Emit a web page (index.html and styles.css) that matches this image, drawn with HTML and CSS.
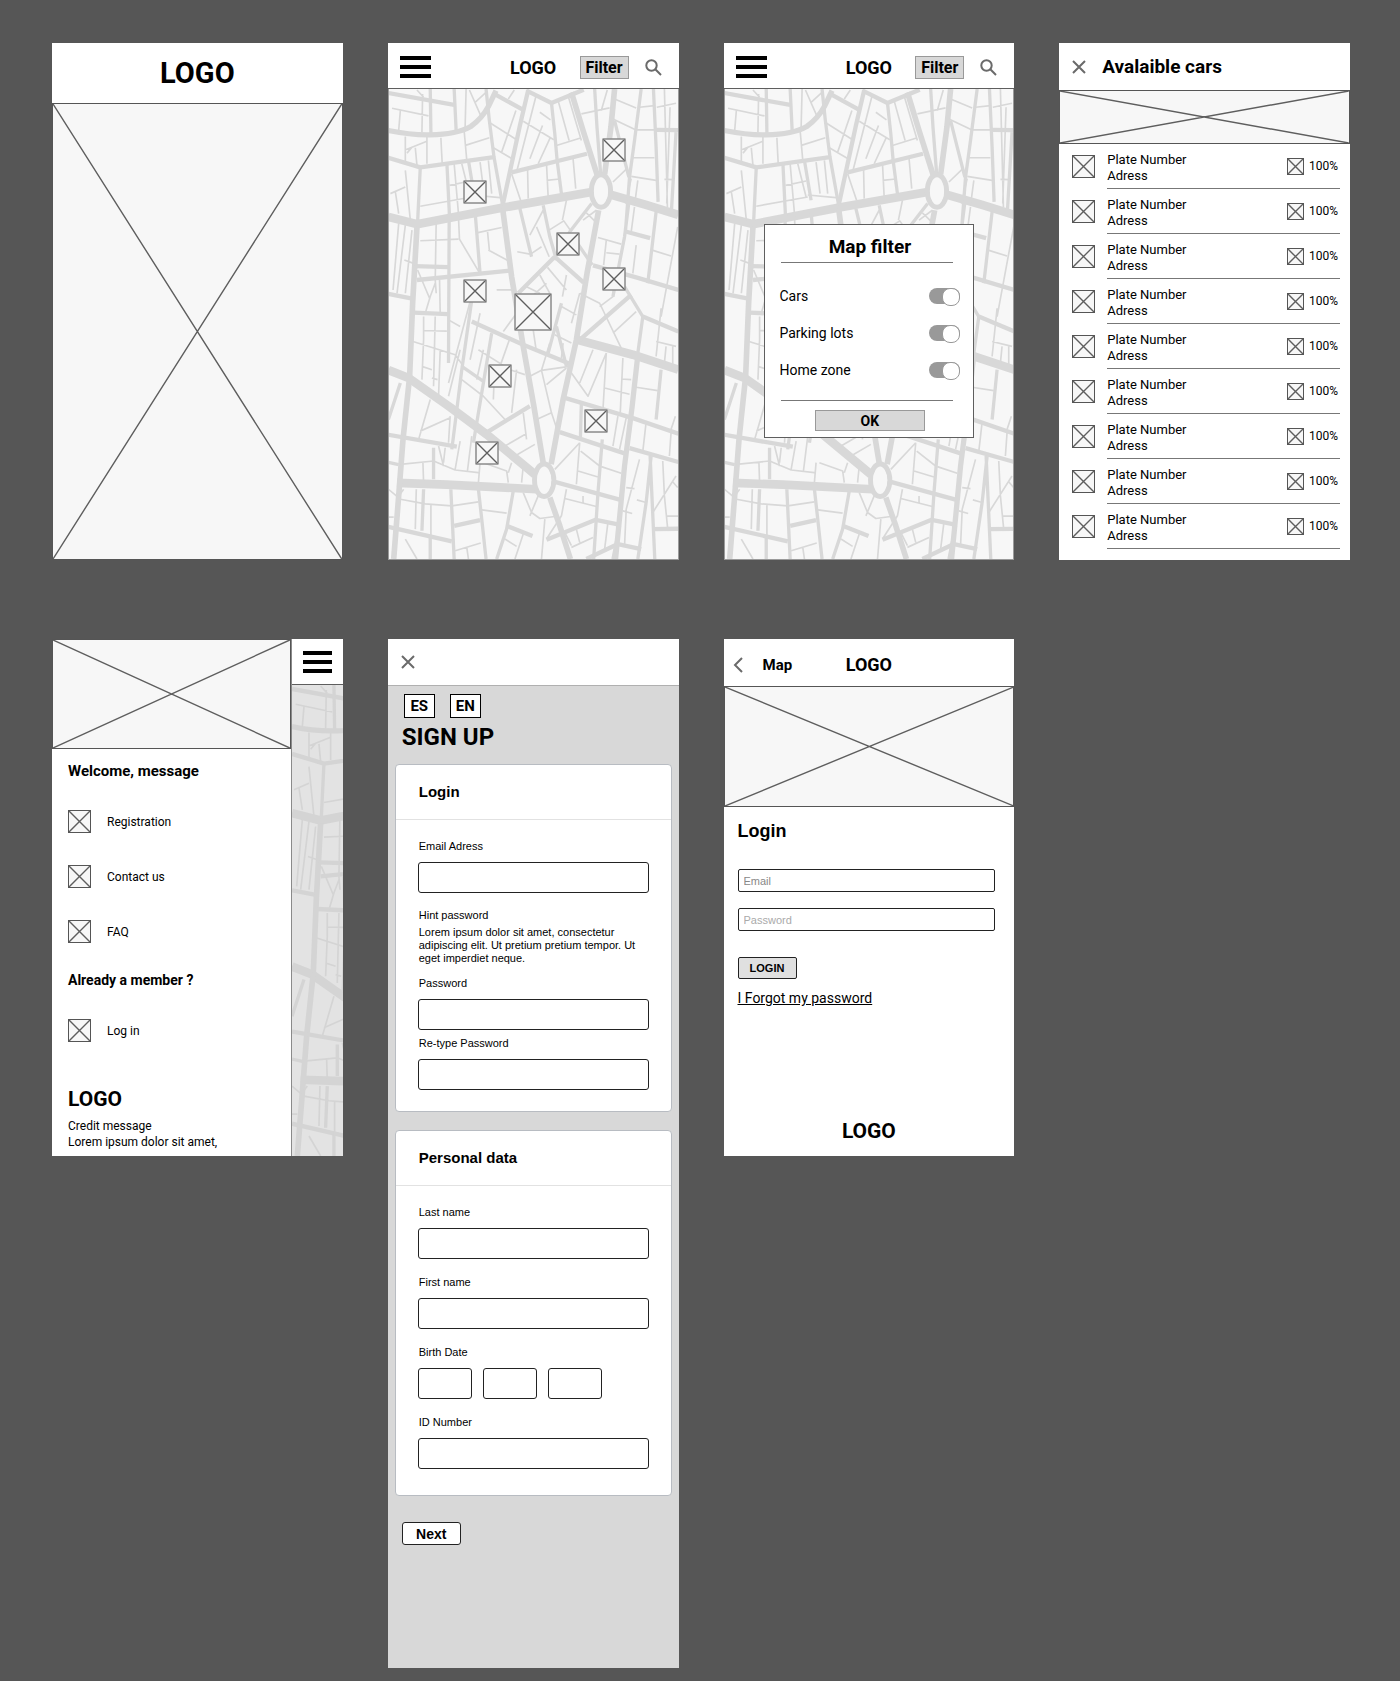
FILE: index.html
```html
<!DOCTYPE html>
<html lang="en">
<head>
<meta charset="utf-8">
<meta name="viewport" content="width=device-width, initial-scale=1">
<title>Car sharing wireframes</title>
<link rel="stylesheet" href="styles.css">
</head>
<body>
<svg class="defs" aria-hidden="true">
  <defs>
    <g id="cross"><path d="M0 0L100 100M100 0L0 100" stroke-width="1.4" vector-effect="non-scaling-stroke"/></g>
    <g id="roads" fill="none" stroke-linejoin="round">
      <!-- boulevards -->
      <path stroke-width="26" d="M24 560L110 582L370 532L640 484M690 492L800 524L897 554M585 928L760 975L897 1020M24 1021L85 1045L210 1133L320 1215L465 1335M50 1361L200 1366L470 1380"/>
      <!-- avenues -->
      <path stroke-width="17" d="M575 185L610 300L652 432M705 175L694 290L675 432M657 540L622 730L590 930L550 1110L514 1305M368 535L395 740L430 950L462 1130L490 1300M110 590L97 820L88 1040L68 1230L55 1400L40 1590M510 1405L540 1490L572 1590"/>
      <path stroke-width="16" d="M24 300Q90 314 150 313Q230 312 272 288Q305 265 325 228L348 180M775 975L758 1130L735 1310L708 1590"/>
      <!-- main streets -->
      <path stroke-width="13" d="M24 382L120 411L342 380M24 187L222 223M348 193L430 238M445 178L420 285L395 400L368 525M440 180L515 217L612 177M395 426L622 370M830 298L897 299M738 604L812 624M640 706L770 742L897 780M790 860L897 905M104 708L205 711M110 750L390 722M24 792L92 805M100 848L203 853M275 875L430 945L570 1002M555 1105L760 1166L897 1213M540 1208L735 1272M750 1256L897 1298M525 1358L720 1411M24 1216L230 1252M24 1493L215 1537M820 1500L897 1499M620 1590L715 1545L785 1560M380 1490L458 1521M500 1532L648 1472L715 1486M222 1490L300 1473M318 1210L450 1130M525 680L415 790M525 680L612 758M600 930L680 860L755 795"/>
      <path stroke-width="10" d="M150 175L152 308M222 175L228 300M318 175L328 270L342 380L368 525M120 411L112 575M515 217L525 310L532 390L545 490M645 175L652 290L663 430M705 270L725 350L748 440M785 175L765 330L750 440L738 600M822 175L830 350L836 515M890 305L876 545M200 395L208 560M265 390L285 510M207 570L205 1000M490 525L510 620L530 690M636 520L570 605L525 680M750 500L735 620L700 800M735 770L790 860L775 970M590 635L638 705M420 535L455 680M830 545L805 760M285 545L300 730M24 1299L55 1306M275 810L245 1020L215 1260M335 910L310 1060L280 1240M245 1010L310 1055M60 1060L24 1170M845 1020L830 1170M400 1385L380 1500L350 1590M212 1380L222 1590M295 1380L305 1470L318 1590M655 1390L642 1590M668 1230L655 1390M815 1280L800 1420L775 1590M812 1280L826 1590M720 1490L700 1590M130 1380L125 1505M150 1525L150 1590M560 1010L530 890M605 1120L602 1230M160 1255L160 1350M545 820L505 970"/>
      <!-- side streets -->
      <path stroke-width="5" d="M127 190L125 305M258 175L255 290M35 233L145 256M60 240L55 300M110 178L130 200M268 178L305 262M285 215L318 185M75 318L75 395M140 318L140 400M182 322L186 400M78 357L140 332M80 368L95 350M105 352L110 405M252 300L260 390M258 344L328 322M327 275L410 328M408 240L365 365M340 352L395 384M385 205L403 178M470 190L410 425M480 245L512 268M430 272L522 328M488 285L450 385M512 320L475 400M535 210L568 330M565 195L605 330M530 345L605 322M605 250L690 232M665 240L683 178M705 205L770 232M700 265L768 298L832 298M780 230L825 225M760 382L825 382M755 438L830 450M890 218L832 230M855 175L864 530M872 230L862 520M855 447L885 448M300 395L312 490M325 390L335 490M222 400L235 550M245 400L270 500M208 465L270 452M275 494L360 502M120 528L275 500M395 430L422 510M443 415L445 505M500 400L505 500M580 385L588 475M500 450L540 446M75 420L90 570M75 470L30 490M45 485L55 550M775 450L765 525M755 445L738 520M700 455L742 415"/>
      <path stroke-width="5" d="M55 580L38 780M75 585L50 790M95 600L75 790M72 690L100 700M120 632L235 627M168 570L165 750L168 790M235 560L238 627L298 728M112 720L148 805M148 805L165 760M178 750L180 850M290 608L365 592M325 660L385 692M328 660L322 600M490 540L450 615M470 590L508 680M412 665L450 672M452 672L485 650M508 600L552 572L575 605M560 510L548 570M620 548L645 572M610 570L650 540M655 622L725 642M680 630L672 705M680 668L720 672M765 530L755 605M818 660L875 678M895 590L845 860M770 645L760 730M708 720L700 800L660 830M503 712L560 780M560 735L548 800M600 790L575 880M480 735L510 790M440 770L480 790M455 800L500 760M350 780L400 780M130 860L130 930L125 1050M165 860L160 1070M130 902L200 904M98 935L225 975L250 1010M180 960L175 1100M150 800L135 850M125 1010L155 1020M155 1045L172 1050M205 870L240 890M270 815L205 1060M240 960L205 1100M300 850L270 990M310 960L290 1050M295 960L390 1020L435 1035M390 925L360 1010M370 905L410 850M343 1030L340 1110M410 1020L395 1150M245 1050L310 1100L375 1170M450 1040L485 1022L570 1010M485 1022L510 940M485 1022L515 1150L530 1195M500 1065L560 1015M470 1170L515 1150M460 900L468 955M545 830L590 855M525 915L575 940M550 940L545 985M600 790L660 820L725 955M700 910L770 845M845 835L830 980M830 935L890 950M860 950L855 1000M880 950L880 1010"/>
      <path stroke-width="5" d="M575 1030L625 1100L680 970M640 960L600 1060M680 970L670 1140M675 1075L750 1094M730 985L722 1150M725 1048L755 1050M770 1073L835 1083M715 1160L700 1250M740 1165L720 1260M800 1178L790 1265M875 1210L870 1280M888 1160L875 1200M150 1110L115 1230M120 1205L210 1165M210 1160L205 1240M175 1250L190 1310M195 1255L190 1300M60 1305L160 1295L225 1322L295 1330M128 1300L130 1360M240 1235L225 1320M275 1220L262 1325M300 1300L295 1360M310 1300L380 1325L385 1360M395 1300L385 1330M375 1250L440 1212M430 1150L440 1230M405 1280L465 1245M430 1310L425 1360M525 1320L600 1240M600 1240L590 1365M603 1265L660 1310M595 1325L655 1343M665 1312L725 1332M560 1380L545 1460L500 1530M555 1408L650 1432M610 1400L610 1420M740 1375L765 1378M730 1445L758 1453M780 1290L740 1440L735 1550M772 1412L800 1420M850 1295L855 1400L865 1500M890 1340L820 1450M878 1355L895 1375M860 1460L897 1461M24 1380L60 1410L135 1424L215 1430L295 1418M108 1380L105 1500M152 1425L152 1530M75 1530L110 1590M225 1565L302 1542M305 1442L380 1452M430 1390L455 1450L480 1468L525 1462M475 1400L450 1460M495 1470L485 1590M375 1530L410 1552M430 1515L405 1590M555 1510L575 1550M590 1500L600 1540M575 1555L640 1525M685 1480L675 1560M24 1464L40 1464M260 1555L265 1590M70 1380L55 1400"/>
      <ellipse cx="664" cy="482" rx="29" ry="49" stroke-width="15"/>
      <ellipse cx="493" cy="1353" rx="29" ry="49" stroke-width="15"/>
    </g>
    <g id="islands"><ellipse cx="664" cy="482" rx="21" ry="36"/><ellipse cx="493" cy="1353" rx="21" ry="35"/></g>
  </defs>
</svg>

<main class="board">
  <section class="screen" aria-label="Splash">
    <header class="bar bar-splash"><h1 class="logo logo-xl">LOGO</h1></header>
    <svg class="cross hero" viewBox="0 0 100 100" preserveAspectRatio="none"><use href="#cross"/></svg>
  </section>

  <section class="screen" aria-label="Map">
    <header class="bar bar-map">
      <button class="burger" aria-label="Menu"><span></span><span></span><span></span></button>
      <h2 class="logo">LOGO</h2>
      <div class="tools">
        <button class="filter">Filter</button>
        <button class="icon" aria-label="Search"><svg width="17" height="17" viewBox="0 0 17 17"><circle cx="6.500" cy="6.500" r="5.200"/><path d="M10.300 10.300L16 16"/></svg></button>
      </div>
    </header>
    <div class="map">
      <svg viewBox="24 175 873 1415" preserveAspectRatio="xMidYMin slice"><use href="#roads"/><use class="islands" href="#islands"/></svg>
      <button class="pin" style="left:78%;top:13%" aria-label="Car"><svg class="cross" viewBox="0 0 100 100"><use href="#cross"/></svg></button>
      <button class="pin" style="left:30%;top:22%" aria-label="Car"><svg class="cross" viewBox="0 0 100 100"><use href="#cross"/></svg></button>
      <button class="pin" style="left:62%;top:33%" aria-label="Car"><svg class="cross" viewBox="0 0 100 100"><use href="#cross"/></svg></button>
      <button class="pin" style="left:78%;top:40.500%" aria-label="Car"><svg class="cross" viewBox="0 0 100 100"><use href="#cross"/></svg></button>
      <button class="pin" style="left:30%;top:43%" aria-label="Car"><svg class="cross" viewBox="0 0 100 100"><use href="#cross"/></svg></button>
      <button class="pin pin-large" style="left:50%;top:47.500%" aria-label="My position"><svg class="cross" viewBox="0 0 100 100"><use href="#cross"/></svg></button>
      <button class="pin" style="left:38.500%;top:61%" aria-label="Car"><svg class="cross" viewBox="0 0 100 100"><use href="#cross"/></svg></button>
      <button class="pin" style="left:71.700%;top:70.700%" aria-label="Car"><svg class="cross" viewBox="0 0 100 100"><use href="#cross"/></svg></button>
      <button class="pin" style="left:34%;top:77.400%" aria-label="Car"><svg class="cross" viewBox="0 0 100 100"><use href="#cross"/></svg></button>
    </div>
  </section>

  <section class="screen" aria-label="Map filter">
    <header class="bar bar-map">
      <button class="burger" aria-label="Menu"><span></span><span></span><span></span></button>
      <h2 class="logo">LOGO</h2>
      <div class="tools">
        <button class="filter">Filter</button>
        <button class="icon" aria-label="Search"><svg width="17" height="17" viewBox="0 0 17 17"><circle cx="6.500" cy="6.500" r="5.200"/><path d="M10.300 10.300L16 16"/></svg></button>
      </div>
    </header>
    <div class="map">
      <svg viewBox="24 175 873 1415" preserveAspectRatio="xMidYMin slice"><use href="#roads"/><use class="islands" href="#islands"/></svg>
      <form class="dialog">
        <h3>Map filter</h3>
        <hr>
        <div class="switches">
          <label>Cars<input type="checkbox" checked></label>
          <label>Parking lots<input type="checkbox" checked></label>
          <label>Home zone<input type="checkbox" checked></label>
        </div>
        <hr>
        <button type="button" class="ok">OK</button>
      </form>
    </div>
  </section>

  <section class="screen" aria-label="Available cars">
    <header class="bar bar-cars">
      <button class="icon" aria-label="Close"><svg width="14" height="14" viewBox="0 0 14 14"><path d="M1 1L13 13M13 1L1 13"/></svg></button>
      <h2>Avalaible cars</h2>
    </header>
    <svg class="cross banner-s" viewBox="0 0 100 100" preserveAspectRatio="none"><use href="#cross"/></svg>
    <ul class="cars">
      <li><svg class="cross box" viewBox="0 0 100 100"><use href="#cross"/></svg><div class="car"><p>Plate Number<br>Adress</p><svg class="cross box-s" viewBox="0 0 100 100"><use href="#cross"/></svg><span>100%</span></div></li>
      <li><svg class="cross box" viewBox="0 0 100 100"><use href="#cross"/></svg><div class="car"><p>Plate Number<br>Adress</p><svg class="cross box-s" viewBox="0 0 100 100"><use href="#cross"/></svg><span>100%</span></div></li>
      <li><svg class="cross box" viewBox="0 0 100 100"><use href="#cross"/></svg><div class="car"><p>Plate Number<br>Adress</p><svg class="cross box-s" viewBox="0 0 100 100"><use href="#cross"/></svg><span>100%</span></div></li>
      <li><svg class="cross box" viewBox="0 0 100 100"><use href="#cross"/></svg><div class="car"><p>Plate Number<br>Adress</p><svg class="cross box-s" viewBox="0 0 100 100"><use href="#cross"/></svg><span>100%</span></div></li>
      <li><svg class="cross box" viewBox="0 0 100 100"><use href="#cross"/></svg><div class="car"><p>Plate Number<br>Adress</p><svg class="cross box-s" viewBox="0 0 100 100"><use href="#cross"/></svg><span>100%</span></div></li>
      <li><svg class="cross box" viewBox="0 0 100 100"><use href="#cross"/></svg><div class="car"><p>Plate Number<br>Adress</p><svg class="cross box-s" viewBox="0 0 100 100"><use href="#cross"/></svg><span>100%</span></div></li>
      <li><svg class="cross box" viewBox="0 0 100 100"><use href="#cross"/></svg><div class="car"><p>Plate Number<br>Adress</p><svg class="cross box-s" viewBox="0 0 100 100"><use href="#cross"/></svg><span>100%</span></div></li>
      <li><svg class="cross box" viewBox="0 0 100 100"><use href="#cross"/></svg><div class="car"><p>Plate Number<br>Adress</p><svg class="cross box-s" viewBox="0 0 100 100"><use href="#cross"/></svg><span>100%</span></div></li>
      <li><svg class="cross box" viewBox="0 0 100 100"><use href="#cross"/></svg><div class="car"><p>Plate Number<br>Adress</p><svg class="cross box-s" viewBox="0 0 100 100"><use href="#cross"/></svg><span>100%</span></div></li>
    </ul>
  </section>

  <section class="screen screen-menu" aria-label="Menu">
    <div class="drawer">
      <svg class="cross banner-m" viewBox="0 0 100 100" preserveAspectRatio="none"><use href="#cross"/></svg>
      <nav class="menu">
        <h2>Welcome, message</h2>
        <a href="#"><svg class="cross box" viewBox="0 0 100 100"><use href="#cross"/></svg>Registration</a>
        <a href="#"><svg class="cross box" viewBox="0 0 100 100"><use href="#cross"/></svg>Contact us</a>
        <a href="#"><svg class="cross box" viewBox="0 0 100 100"><use href="#cross"/></svg>FAQ</a>
        <h3>Already a member ?</h3>
        <a href="#"><svg class="cross box" viewBox="0 0 100 100"><use href="#cross"/></svg>Log in</a>
      </nav>
      <footer class="credit">
        <p class="logo logo-m">LOGO</p>
        <p>Credit message<br>Lorem ipsum dolor sit amet,</p>
      </footer>
    </div>
    <div class="behind">
      <header class="bar bar-behind"><button class="burger" aria-label="Close menu"><span></span><span></span><span></span></button></header>
      <svg class="strip" viewBox="24 175 873 1415" preserveAspectRatio="xMinYMin slice"><use href="#roads"/></svg>
    </div>
  </section>

  <section class="screen screen-signup" aria-label="Sign up">
    <header class="bar bar-signup">
      <button class="icon" aria-label="Close"><svg width="14" height="14" viewBox="0 0 14 14"><path d="M1 1L13 13M13 1L1 13"/></svg></button>
    </header>
    <form class="signup">
      <div class="langs"><button type="button">ES</button><button type="button">EN</button></div>
      <h2>SIGN UP</h2>
      <section class="card">
        <h3>Login</h3>
        <div class="fields">
          <div class="field"><label for="su-mail">Email Adress</label><input id="su-mail" type="email"></div>
          <div class="hint"><p>Hint password</p><p>Lorem ipsum dolor sit amet, consectetur<br>adipiscing elit. Ut pretium pretium tempor. Ut<br>eget imperdiet neque.</p></div>
          <div class="field field-first"><label for="su-pass">Password</label><input id="su-pass" type="password"></div>
          <div class="field"><label for="su-pass2">Re-type Password</label><input id="su-pass2" type="password"></div>
        </div>
      </section>
      <section class="card card-personal">
        <h3>Personal data</h3>
        <div class="fields">
          <div class="field"><label for="last">Last name</label><input id="last" type="text"></div>
          <div class="field"><label for="first">First name</label><input id="first" type="text"></div>
          <div class="field"><label for="day">Birth Date</label><div class="date"><input id="day" type="text" aria-label="Day"><input type="text" aria-label="Month"><input type="text" aria-label="Year"></div></div>
          <div class="field"><label for="idn">ID Number</label><input id="idn" type="text"></div>
        </div>
      </section>
      <button type="button" class="next">Next</button>
    </form>
  </section>

  <section class="screen" aria-label="Login">
    <header class="bar bar-login">
      <a class="back" href="#"><svg width="10" height="16" viewBox="0 0 10 16"><path d="M9 1L2 8L9 15"/></svg>Map</a>
      <h2 class="logo">LOGO</h2>
    </header>
    <svg class="cross banner-l" viewBox="0 0 100 100" preserveAspectRatio="none"><use href="#cross"/></svg>
    <form class="login">
      <h3>Login</h3>
      <input type="email" placeholder="Email" aria-label="Email">
      <input type="password" class="pass" placeholder="Password" aria-label="Password">
      <button type="button">LOGIN</button>
      <a href="#">I Forgot my password</a>
    </form>
    <p class="logo logo-m logo-foot">LOGO</p>
  </section>
</main>
</body>
</html>
```
FILE: styles.css
```css
* { box-sizing: border-box; }

body {
  margin: 0;
  background: #565656;
  color: #000;
  font-family: Roboto, "Liberation Sans", sans-serif;
  font-size: 12px;
}

h1, h2, h3, p, ul { margin: 0; padding: 0; }
ul { list-style: none; }
svg { display: block; }
button, input { font-family: inherit; color: inherit; margin: 0; }
button { padding: 0; cursor: pointer; }
a { color: inherit; }

.defs { position: absolute; width: 0; height: 0; }

.board {
  display: grid;
  grid-template-columns: repeat(4, minmax(0, 1fr));
  align-items: start;
  gap: 79px 45px;
  padding: 43px 50px 13px 52px;
}

.screen {
  display: flex;
  flex-direction: column;
  min-height: 517px;
  background: #fff;
}

/* shared pieces */
.cross {
  width: 100%;
  background: #f7f7f7;
  border: 1px solid #555;
  stroke: #5e5e5e;
}
.box { width: 23px; height: 23px; flex: none; }
.box-s { width: 17px; height: 17px; flex: none; }
.hero { flex: 1 1 0; height: 0; }
.banner-s { height: 54px; }
.banner-m { height: 110px; }
.banner-l { height: 121px; }

.logo { font-size: 18px; line-height: 24px; font-weight: 700; }
.logo-xl { font-size: 29px; }
.logo-m { font-size: 21px; }

.icon {
  display: block;
  background: none;
  border: 0;
}
.icon svg, .back svg {
  fill: none;
  stroke: #6a6a6a;
  stroke-width: 2;
}

.burger {
  display: flex;
  flex-direction: column;
  gap: 5px;
  width: 31px;
  background: none;
  border: 0;
}
.burger span { height: 4px; width: 100%; background: #000; }

/* header bars */
.bar { display: flex; align-items: center; flex: none; }
.bar-splash { height: 60px; justify-content: center; }
.bar-map {
  display: grid;
  grid-template-columns: 1fr auto 1fr;
  height: 46px;
  padding: 4px 12px 0;
  border-bottom: 1px solid #5e5e5e;
}
.bar-map .burger { margin-bottom: 2px; }
.bar-cars { height: 47px; padding: 0 13px; gap: 16px; }
.bar-cars h2 { font-size: 19px; }
.bar-behind { height: 45px; padding: 0 11px; }
.bar-signup { height: 47px; padding: 0 13px; border-bottom: 1px solid #b0b0b0; }
.bar-login {
  display: grid;
  grid-template-columns: 1fr auto 1fr;
  height: 47px;
  padding: 4px 9px 0;
}

.tools {
  display: flex;
  justify-content: flex-end;
  align-items: center;
  gap: 16px;
  padding-right: 5px;
}
.filter {
  width: 49px;
  height: 23px;
  background: #d8d8d8;
  border: 1px solid #999;
  font-size: 16px;
  font-weight: 700;
}
.back {
  display: flex;
  align-items: center;
  gap: 20px;
  font-size: 15px;
  font-weight: 700;
  text-decoration: none;
}

/* map */
.map {
  position: relative;
  flex: 1;
  display: flex;
  background: #f7f7f7;
  border: 1px solid #9a9a9a;
  border-top: 0;
  stroke: #d8d8d8;
}
.map > svg { width: 100%; }
.islands { fill: #f7f7f7; stroke: none; }
.pin {
  position: absolute;
  width: 23px;
  height: 23px;
  transform: translate(-50%, -50%);
  background: none;
  border: 0;
}
.pin-large { width: 37px; height: 37px; }
.pin .cross { height: 100%; }

.dialog {
  position: absolute;
  top: 135px;
  left: 39px;
  right: 39px;
  display: flex;
  flex-direction: column;
  padding: 7px 13px 6px 15px;
  background: #fff;
  border: 1px solid #5e5e5e;
}
.dialog h3 { font-size: 19px; line-height: 30px; text-align: center; }
.dialog hr {
  width: auto;
  height: 0;
  margin: 0 7px 0 1px;
  border: 0;
  border-top: 1px solid #777;
}
.switches { padding: 14px 0 12px; }
.switches label {
  display: flex;
  justify-content: space-between;
  align-items: center;
  height: 37px;
  font-size: 14px;
}
.switches input {
  appearance: none;
  display: flex;
  justify-content: flex-end;
  width: 31px;
  height: 16px;
  border-radius: 8px;
  background: #999;
}
.switches input::before {
  content: "";
  width: 16px;
  height: 16px;
  border: 1px solid #999;
  border-radius: 8px;
  background: #fff;
}
.ok {
  width: 110px;
  height: 21px;
  margin: 9px auto 0;
  background: #d8d8d8;
  border: 1px solid #999;
  font-size: 14px;
  font-weight: 700;
}

/* list of cars */
.cars li {
  display: flex;
  align-items: center;
  gap: 12px;
  height: 45px;
  padding: 0 10px 0 13px;
}
.car {
  display: flex;
  align-items: center;
  gap: 5px;
  flex: 1;
  height: 45px;
  padding-right: 2px;
  border-bottom: 1px solid #777;
}
.car p { flex: 1; padding-top: 4px; font-size: 13px; line-height: 16px; }

/* menu drawer */
.screen-menu { flex-direction: row; }
.drawer { flex: 1; display: flex; flex-direction: column; }
.menu { padding: 12px 16px 0; }
.menu h2 { font-size: 15px; line-height: 20px; margin-bottom: 29px; }
.menu h3 { font-size: 14px; line-height: 20px; margin: 27px 0 29px; }
.menu a {
  display: flex;
  align-items: center;
  gap: 16px;
  text-decoration: none;
}
.menu a + a { margin-top: 32px; }
.credit { padding: 45px 16px 6px; line-height: 16px; }
.credit .logo { line-height: 24px; margin-bottom: 7px; }
.behind {
  width: 52px;
  display: flex;
  flex-direction: column;
  border-left: 1px solid #8a8a8a;
}
.strip {
  flex: 1 1 0;
  width: 100%;
  height: 0;
  background: #e3e3e3;
  border-top: 1px solid #5e5e5e;
  stroke: #d4d4d4;
}

/* sign up */
.screen-signup { min-height: 1029px; background: #d8d8d8; }
.bar-signup { background: #fff; }
.signup { padding: 8px 7px 0; font-family: "Liberation Sans", Arial, sans-serif; }
.signup .langs { display: flex; gap: 15px; padding-left: 9px; }
.langs button {
  width: 31px;
  height: 24px;
  background: #fff;
  border: 1px solid #000;
  font-family: Roboto, sans-serif;
  font-size: 15px;
  font-weight: 700;
}
.signup h2 {
  margin: 4px 0 12px;
  padding-left: 7px;
  font-family: Roboto, sans-serif;
  font-size: 24px;
  line-height: 30px;
}
.card { background: #fff; border: 1px solid #b8bcc2; border-radius: 4px; }
.card-personal { margin-top: 18px; }
.card h3 {
  padding: 0 23px;
  font-size: 15px;
  line-height: 54px;
  border-bottom: 1px solid #e2e2e2;
}
.fields { padding: 19px 22px 21px; font-size: 11px; }
.card-personal .fields { padding-bottom: 26px; }
.field { display: flex; flex-direction: column; gap: 9px; }
.field + .field { margin-top: 6px; }
.card-personal .field + .field { margin-top: 16px; }
.field-first { margin-top: 11px; }
.field label, .hint { padding-left: 1px; }
.field label, .hint p:first-child { line-height: 14px; }
.field input {
  width: 100%;
  height: 31px;
  background: #fff;
  border: 1px solid #222;
  border-radius: 3px;
}
.hint { margin-top: 15px; line-height: 13px; white-space: nowrap; }
.hint p:first-child { margin-bottom: 4px; }
.date { display: flex; gap: 11px; }
.date input { width: 54px; }
.next {
  width: 59px;
  height: 23px;
  margin: 26px 0 0 7px;
  background: #fff;
  border: 1px solid #222;
  border-radius: 3px;
  font-size: 14px;
  font-weight: 700;
}

/* login */
.login {
  display: flex;
  flex-direction: column;
  align-items: flex-start;
  padding: 13px 19px 0 14px;
}
.login h3 {
  margin-bottom: 27px;
  font-family: "Liberation Sans", Arial, sans-serif;
  font-size: 18px;
  line-height: 22px;
}
.login input {
  width: 100%;
  height: 23px;
  margin-bottom: 16px;
  padding: 0 5px;
  background: #fff;
  border: 1px solid #222;
  border-radius: 2px;
  font-family: "Liberation Sans", Arial, sans-serif;
  font-size: 11px;
}
.login input::placeholder { color: #888; }
.login .pass { margin-bottom: 26px; }
.login .pass::placeholder { color: #aaa; }
.login button {
  width: 59px;
  height: 22px;
  background: #e0e0e0;
  border: 1px solid #222;
  border-radius: 2px;
  font-family: "Liberation Sans", Arial, sans-serif;
  font-size: 11px;
  font-weight: 700;
}
.login a { margin-top: 9px; font-size: 14px; line-height: 20px; }
.logo-foot { margin-top: auto; padding-bottom: 13px; text-align: center; }
```
